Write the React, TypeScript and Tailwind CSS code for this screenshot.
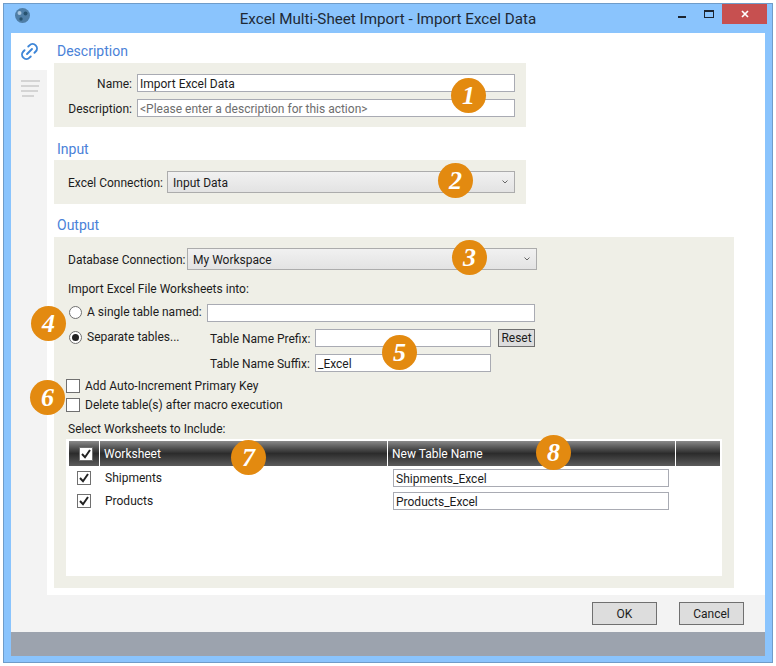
import React from 'react';
import { Link2 } from 'lucide-react';

const font = "font-['Roboto','Noto_Sans',sans-serif]";

function Heading({ children, className }: { children: string; className: string }) {
  return <div className={`pl-[3px] text-[14px] leading-[18px] text-[#4a82d8] ${className}`}>{children}</div>;
}

function TextBox({ value, className, muted }: { value?: string; className: string; muted?: boolean }) {
  return (
    <div className={`flex shrink-0 items-center border border-[#a9abb3] bg-white pl-[2px] pt-[1px] text-[12px] leading-none ${muted ? 'text-[#6d6d6d]' : 'text-[#1c1c1c]'} ${className}`}>
      {value}
    </div>
  );
}

function Combo({ value, className }: { value: string; className: string }) {
  return (
    <div className={`flex shrink-0 items-center justify-between border border-[#acacac] bg-gradient-to-b from-[#f1f1f1] to-[#e3e3e3] pl-[5px] pr-[6px] text-[12px] text-[#1c1c1c] ${className}`}>
      <span className="pt-[1px]">{value}</span>
      <svg width="6" height="4" viewBox="0 0 6 4" fill="none" stroke="#666" strokeWidth="1">
        <path d="M.5.5L3 3 5.500.5" />
      </svg>
    </div>
  );
}

function Check({ checked, className = '' }: { checked?: boolean; className?: string }) {
  return (
    <div className={`flex h-[14px] w-[14px] shrink-0 items-center justify-center border border-[#707070] bg-white ${className}`}>
      {checked && (
        <svg width="12" height="12" viewBox="0 0 12 12" fill="none" stroke="#222" strokeWidth="2">
          <path d="M2 6l3 3.2L10 2" />
        </svg>
      )}
    </div>
  );
}

function Radio({ checked }: { checked?: boolean }) {
  return (
    <div className="-mt-[2px] flex h-[13px] w-[13px] shrink-0 items-center justify-center rounded-full border border-[#707070] bg-white">
      {checked && <div className="h-[7px] w-[7px] rounded-full bg-[#222]" />}
    </div>
  );
}

function Badge({ n, className }: { n: string; className: string }) {
  return (
    <div className={`absolute flex h-[35px] w-[35px] items-center justify-center rounded-full bg-[#e38a10] font-['Liberation_Serif',serif] text-[26px] font-bold italic leading-none text-white ${className}`}>
      {n}
    </div>
  );
}

function DialogButton({ label }: { label: string }) {
  return (
    <div className="flex h-[23px] w-[65px] items-center justify-center border border-[#707070] bg-[#dddddd] text-[12px] text-[#1c1c1c]">
      {label}
    </div>
  );
}

const headerCell = 'flex h-full items-center border-r border-white pl-[4px]';

export default function App() {
  return (
    <div className={`relative h-[666px] w-[776px] whitespace-nowrap bg-white pl-[3px] pt-[3px] ${font}`}>
      <div className="flex h-[660px] w-[770px] flex-col border border-[#6f9cc9] bg-[#8ac4fd] px-[7px] pb-[6px]">
        <div className="relative -mx-[7px] flex h-[29px] shrink-0 items-center justify-center pt-[2px] text-[15.2px] text-[#1f2a36]">
          <svg className="absolute left-[10px] top-[3px]" width="17" height="17" viewBox="0 0 17 17">
            <circle cx="8.5" cy="8.5" r="7.5" fill="#4f7ea6" />
            <circle cx="5.5" cy="6" r="2" fill="#a9c6de" />
            <circle cx="11.5" cy="6.5" r="2" fill="#27526f" />
            <circle cx="7" cy="12" r="1.7" fill="#27526f" />
          </svg>
          <span>Excel Multi-Sheet Import - Import Excel Data</span>
          <div className="absolute right-[5px] top-0 flex h-[20px] items-start">
            <div className="mr-[18px] mt-[12px] h-[2px] w-[8px] bg-[#1c2530]" />
            <div className="mr-[8px] mt-[6px] h-[8px] w-[10px] border border-t-2 border-[#1c2530]" />
            <div className="flex h-[20px] w-[45px] items-center justify-center bg-[#c75050]">
              <svg width="8" height="8" viewBox="0 0 8 8" stroke="white" strokeWidth="1.7">
                <path d="M1 1l6 6M7 1L1 7" />
              </svg>
            </div>
          </div>
        </div>

        <div className="flex min-h-0 flex-1 flex-col bg-white">
          <div className="flex flex-1">
            <div className="flex w-[36px] shrink-0 flex-col">
              <div className="flex h-[37px] items-center justify-center bg-white">
                <Link2 className="-rotate-45 text-[#3e86d8]" size={21} strokeWidth={2.2} />
              </div>
              <div className="flex-1 bg-[#f3f3f3] pl-[10px] pt-[10px]">
                <svg width="19" height="20" viewBox="0 0 19 20" fill="none" stroke="#d4d4d4" strokeWidth="2">
                  <path d="M0 1h19M0 6h18M0 11h17M1 16h12" />
                </svg>
              </div>
            </div>

            <div className="flex flex-1 flex-col pl-[7px] pt-[9px]">
              <Heading className="mb-[3px]">Description</Heading>
              <div className="flex h-[64px] w-[472px] flex-col gap-[7px] bg-[#efefe7] pl-[14px] pt-[11px] text-[12px] text-[#1c1c1c]">
                <div className="flex items-center">
                  <span className="w-[69px] shrink-0 pr-[5px] pt-[1px] text-right leading-[16px]">Name:</span>
                  <TextBox value="Import Excel Data" className="h-[18px] w-[378px]" />
                </div>
                <div className="flex items-center">
                  <span className="w-[69px] shrink-0 pr-[5px] pt-[1px] text-right leading-[16px]">Description:</span>
                  <TextBox value="<Please enter a description for this action>" muted className="h-[18px] w-[378px]" />
                </div>
              </div>

              <Heading className="mb-[2px] mt-[13px]">Input</Heading>
              <div className="flex h-[44px] w-[472px] items-center bg-[#efefe7] pl-[14px] text-[12px] text-[#1c1c1c]">
                <span className="w-[99px] shrink-0 pt-[1px]">Excel Connection:</span>
                <Combo value="Input Data" className="h-[22px] w-[348px]" />
              </div>

              <Heading className="mb-[3px] mt-[12px]">Output</Heading>
              <div className="flex h-[351px] w-[680px] flex-col bg-[#efefe7] pl-[12px] pt-[11px] text-[12px] text-[#1c1c1c]">
                <div className="flex items-center pl-[2px]">
                  <span className="w-[119px] shrink-0 pt-[1px]">Database Connection:</span>
                  <Combo value="My Workspace" className="h-[22px] w-[350px]" />
                </div>
                <div className="mt-[11px] pl-[2px] leading-[16px]">Import Excel File Worksheets into:</div>
                <div className="mt-[7px] flex h-[18px] items-center pl-[3px]">
                  <Radio />
                  <span className="-mt-[2px] ml-[5px] w-[120px] shrink-0">A single table named:</span>
                  <TextBox className="h-[18px] w-[328px]" />
                </div>
                <div className="mt-[7px] flex pl-[3px]">
                  <div className="flex h-[18px] items-center">
                    <Radio checked />
                    <span className="-mt-[2px] ml-[5px] w-[123px] shrink-0">Separate tables...</span>
                  </div>
                  <div className="flex flex-col gap-[7px]">
                    <div className="flex items-center">
                      <span className="w-[105px] shrink-0 pt-[1px] leading-[16px]">Table Name Prefix:</span>
                      <TextBox className="h-[18px] w-[176px]" />
                      <div className="ml-[7px] flex h-[18px] w-[37px] items-center justify-center border border-[#707070] bg-[#dddddd]">Reset</div>
                    </div>
                    <div className="flex items-center">
                      <span className="w-[105px] shrink-0 pt-[1px] leading-[16px]">Table Name Suffix:</span>
                      <TextBox value="_Excel" className="h-[18px] w-[176px]" />
                    </div>
                  </div>
                </div>
                <div className="mt-[7px] flex h-[14px] items-center">
                  <Check />
                  <span className="ml-[5px]">Add Auto-Increment Primary Key</span>
                </div>
                <div className="mt-[5px] flex h-[14px] items-center">
                  <Check />
                  <span className="ml-[5px]">Delete table(s) after macro execution</span>
                </div>
                <div className="mt-[9px] pl-[2px] leading-[16px]">Select Worksheets to Include:</div>
                <div className="mt-[2px] h-[137px] w-[656px] bg-white pl-[3px] pt-[2px]">
                  <div className="flex h-[25px] w-[651px] items-center bg-gradient-to-b from-[#8a8a8a] via-[#2c2c2c] to-[#5c5c5c] text-white">
                    <div className={`${headerCell} w-[31px] justify-center pl-0`}>
                      <Check checked />
                    </div>
                    <div className={`${headerCell} w-[288px]`}>Worksheet</div>
                    <div className={`${headerCell} w-[288px]`}>New Table Name</div>
                  </div>
                  {['Shipments', 'Products'].map((name, i) => (
                    <div key={name} className={`flex h-[18px] items-center ${i === 0 ? 'mt-[3px]' : 'mt-[5px]'}`}>
                      <Check checked className="ml-[8px]" />
                      <span className="ml-[14px] w-[288px] shrink-0">{name}</span>
                      <TextBox value={`${name}_Excel`} className="h-[18px] w-[276px]" />
                    </div>
                  ))}
                </div>
              </div>
            </div>
          </div>

          <div className="flex h-[37px] shrink-0 items-center justify-end gap-[22px] bg-[#f3f3f3] pr-[21px]">
            <DialogButton label="OK" />
            <DialogButton label="Cancel" />
          </div>
          <div className="h-[24px] shrink-0 bg-[#9ca3ae]" />
        </div>
      </div>

      <Badge n="1" className="left-[451px] top-[78px]" />
      <Badge n="2" className="left-[438px] top-[163px]" />
      <Badge n="3" className="left-[452px] top-[240px]" />
      <Badge n="4" className="left-[31px] top-[306px]" />
      <Badge n="5" className="left-[382px] top-[335px]" />
      <Badge n="6" className="left-[30px] top-[380px]" />
      <Badge n="7" className="left-[231px] top-[440px]" />
      <Badge n="8" className="left-[536px] top-[435px]" />
    </div>
  );
}
